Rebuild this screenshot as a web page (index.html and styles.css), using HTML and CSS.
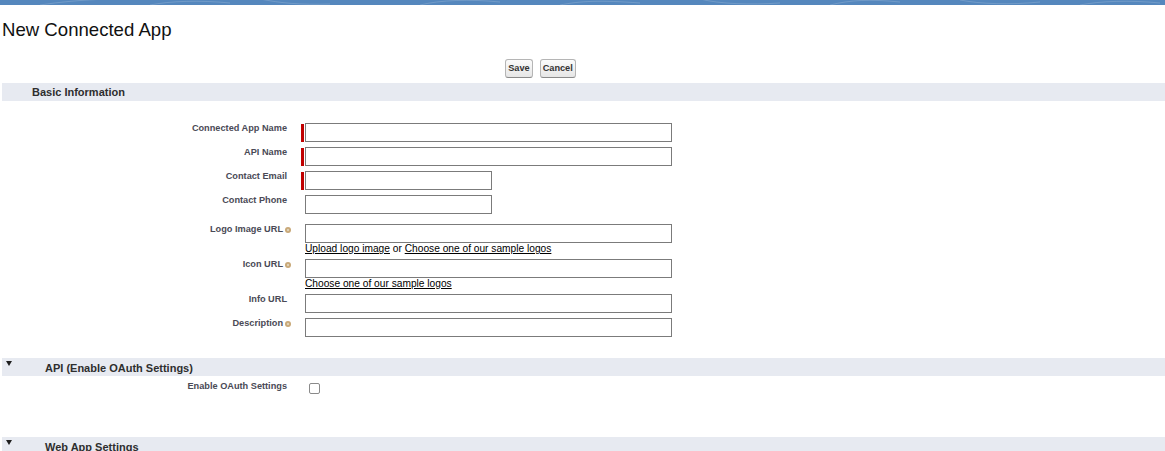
FILE: index.html
```html
<!DOCTYPE html>
<html lang="en">
<head>
<meta charset="utf-8">
<title>New Connected App</title>
<link rel="stylesheet" href="styles.css">
</head>
<body>
<div class="topbar">
  <svg class="topbar-art" viewBox="0 0 1165 5" preserveAspectRatio="none" aria-hidden="true">
    <path d="M40 5 C60 2 80 0 110 -1" />
    <path d="M150 5 C170 1 200 0 230 3" />
    <path d="M260 -1 C280 3 300 5 330 4" />
    <path d="M420 5 C440 0 470 -1 500 2" />
    <path d="M560 5 C580 1 600 0 640 3" />
    <path d="M700 -1 C720 4 750 5 780 3" />
    <path d="M830 5 C850 0 870 -1 900 2" />
    <path d="M960 0 C980 4 1010 5 1040 2" />
    <path d="M1080 5 C1100 1 1130 0 1160 3" />
  </svg>
</div>
<div class="page">
  <h1 class="title">New Connected App</h1>
  <div class="btn-bar">
    <button class="btn" type="button">Save</button>
    <button class="btn" type="button">Cancel</button>
  </div>

  <section class="section">
    <div class="section-header plain"><h3 class="section-title">Basic Information</h3></div>
    <div class="section-body basic">
      <div class="row">
        <label class="label">Connected App Name</label>
        <div class="field"><span class="req"></span><div class="field-main"><input class="input wide" type="text"></div></div>
      </div>
      <div class="row">
        <label class="label">API Name</label>
        <div class="field"><span class="req"></span><div class="field-main"><input class="input wide" type="text"></div></div>
      </div>
      <div class="row">
        <label class="label">Contact Email</label>
        <div class="field"><span class="req"></span><div class="field-main"><input class="input short" type="text"></div></div>
      </div>
      <div class="row">
        <label class="label">Contact Phone</label>
        <div class="field"><span class="req none"></span><div class="field-main"><input class="input short" type="text"></div></div>
      </div>
      <div class="row spaced">
        <label class="label">Logo Image URL<svg class="help" viewBox="0 0 6 6" aria-hidden="true"><circle cx="3" cy="3" r="3" /><circle class="help-dot" cx="3" cy="3" r="1.2" /></svg></label>
        <div class="field"><span class="req none"></span><div class="field-main"><input class="input wide" type="text"><div class="links"><a href="#">Upload logo image</a> or <a href="#">Choose one of our sample logos</a></div></div></div>
      </div>
      <div class="row">
        <label class="label">Icon URL<svg class="help" viewBox="0 0 6 6" aria-hidden="true"><circle cx="3" cy="3" r="3" /><circle class="help-dot" cx="3" cy="3" r="1.2" /></svg></label>
        <div class="field"><span class="req none"></span><div class="field-main"><input class="input wide" type="text"><div class="links"><a href="#">Choose one of our sample logos</a></div></div></div>
      </div>
      <div class="row">
        <label class="label">Info URL</label>
        <div class="field"><span class="req none"></span><div class="field-main"><input class="input wide" type="text"></div></div>
      </div>
      <div class="row">
        <label class="label">Description<svg class="help" viewBox="0 0 6 6" aria-hidden="true"><circle cx="3" cy="3" r="3" /><circle class="help-dot" cx="3" cy="3" r="1.2" /></svg></label>
        <div class="field"><span class="req none"></span><div class="field-main"><input class="input wide" type="text"></div></div>
      </div>
    </div>
  </section>

  <section class="section">
    <div class="section-header twisty-header"><span class="twisty"><span class="tri"></span></span><h3 class="section-title">API (Enable OAuth Settings)</h3></div>
    <div class="section-body api">
      <div class="row check-row">
        <label class="label">Enable OAuth Settings</label>
        <div class="field"><span class="req none"></span><div class="field-main"><input class="checkbox" type="checkbox"></div></div>
      </div>
    </div>
  </section>

  <section class="section">
    <div class="section-header twisty-header"><span class="twisty"><span class="tri"></span></span><h3 class="section-title">Web App Settings</h3></div>
  </section>
</div>
</body>
</html>
```

FILE: styles.css
```css
html, body {
  margin: 0;
  padding: 0;
  background: #ffffff;
  overflow: hidden;
}

body {
  font-family: "Liberation Sans", Arial, sans-serif;
  color: #222;
}

.topbar {
  height: 5px;
  background: #5587bd;
  overflow: hidden;
}

.topbar-art {
  display: block;
  width: 100%;
  height: 5px;
}

.topbar-art path {
  fill: none;
  stroke: rgba(255, 255, 255, 0.28);
  stroke-width: 0.6;
}

.page {
  padding-left: 2px;
}

.title {
  margin: 14px 0 0;
  font-size: 18.6px;
  line-height: 22px;
  font-weight: normal;
  color: #111;
}

.btn-bar {
  display: flex;
  justify-content: center;
  gap: 7px;
  margin-top: 18px;
  padding-right: 86px;
}

.btn {
  box-sizing: border-box;
  height: 19px;
  margin: 0;
  padding: 0 2px;
  font-family: "Liberation Sans", Arial, sans-serif;
  font-size: 9.2px;
  font-weight: bold;
  line-height: 17px;
  color: #333;
  background: linear-gradient(#fbfbfb, #e6e6e6);
  border: 1px solid #b5b5b5;
  border-bottom-color: #8a8a8a;
  border-radius: 3px;
}

.section-header {
  display: flex;
  align-items: flex-start;
  box-sizing: border-box;
  height: 18px;
  background: #e7eaf1;
}

.section-header.plain {
  margin-top: 5px;
  padding-left: 30px;
}

.section-title {
  margin: 0;
  font-size: 11px;
  font-weight: bold;
  color: #2e2e2e;
}

.plain .section-title {
  padding-top: 1px;
  line-height: 17px;
}

.twisty-header {
  padding-left: 4px;
}

.twisty-header .section-title {
  padding-top: 3px;
  line-height: 15px;
}

.twisty {
  width: 39px;
  flex: none;
  padding-top: 2px;
}

.tri {
  display: block;
  width: 0;
  height: 0;
  margin-top: 1px;
  border-left: 3.5px solid transparent;
  border-right: 3.5px solid transparent;
  border-top: 5px solid #1f1f1f;
}

.section-body.basic {
  padding: 20px 0 18px;
}

.section-body.api {
  padding: 0 0 36px;
}

.row {
  display: grid;
  grid-template-columns: 285px 1fr;
  padding: 2px 0 3px;
}

.row.spaced {
  margin-top: 5px;
}

.row.check-row {
  padding-top: 5px;
  padding-bottom: 1px;
}

.label {
  display: block;
  padding-top: 0;
  text-align: right;
  font-size: 9.2px;
  font-weight: bold;
  line-height: 11px;
  color: #4a4a56;
  white-space: nowrap;
}

.help {
  display: inline-block;
  width: 6px;
  height: 6px;
  margin-left: 2px;
  margin-right: -4px;
  vertical-align: -1px;
}

.help circle {
  fill: #c8a878;
}

.help .help-dot {
  fill: #e0d2b8;
}

.field {
  display: flex;
  align-items: flex-start;
  padding-left: 14px;
}

.req {
  flex: none;
  width: 3px;
  height: 18px;
  margin: 1px 1px 0 0;
  background: #c00000;
}

.req.none {
  background: transparent;
}

.field-main {
  display: flex;
  flex-direction: column;
  align-items: flex-start;
}

.input {
  box-sizing: border-box;
  height: 19px;
  margin: 0;
  padding: 0 2px;
  border: 1px solid #7b7b7b;
  border-radius: 0;
  background: #fff;
  font-family: "Liberation Sans", Arial, sans-serif;
  font-size: 11px;
}

.input.wide {
  width: 367px;
}

.input.short {
  width: 187px;
}

.links {
  height: 11px;
  font-size: 10.2px;
  line-height: 11px;
  color: #000;
  white-space: nowrap;
}

.links a {
  color: #000;
  text-decoration: underline;
}

.checkbox {
  appearance: none;
  -webkit-appearance: none;
  box-sizing: border-box;
  width: 11px;
  height: 11px;
  margin: 2px 0 0 4px;
  border: 1px solid #8a8a8a;
  border-radius: 2px;
  background: #fff;
}
```
